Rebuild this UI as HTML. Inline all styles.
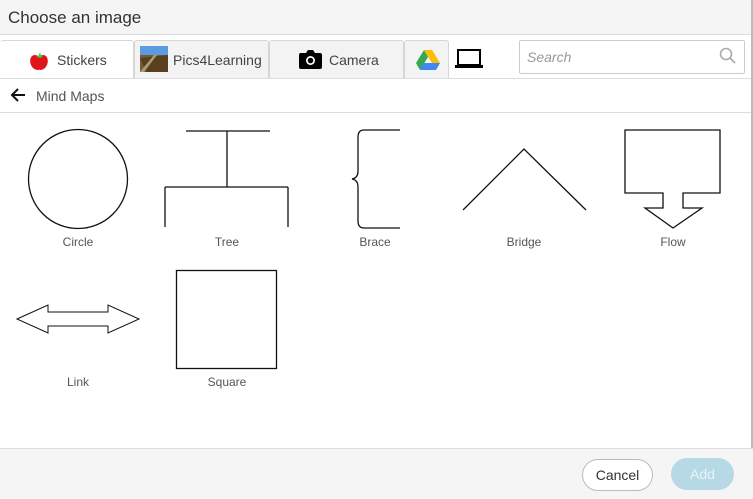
<!DOCTYPE html>
<html><head><meta charset="utf-8"><style>
*{margin:0;padding:0;box-sizing:border-box}
body{width:753px;height:499px;background:#fff;font-family:"Liberation Sans",Arial,sans-serif;position:relative;overflow:hidden;color:#444}
.a{position:absolute}
.tab{position:absolute;top:40px;height:38px;background:#f3f3f3;border:1px solid #d6d6d6;border-bottom:none;border-radius:3px 3px 0 0;font-size:14px;color:#444;display:flex;align-items:center}
.lbl{position:absolute;font-size:12px;color:#555;text-align:center;width:120px}
</style></head><body>
<div class="a" style="left:0;top:0;width:753px;height:35px;background:#f5f5f5;border-bottom:1px solid #ddd"></div>
<div class="a" style="left:8px;top:8px;font-size:17px;color:#333">Choose an image</div>
<div class="a" style="left:0;top:78px;width:753px;height:1px;background:#ddd"></div>
<div class="tab" style="left:0;width:134px;background:#fff;border-left:none">
<svg class="a" style="left:28px;top:9px" width="22" height="22" viewBox="0 0 20 20"><path d="M10 6C6 3 2 5 2 10c0 5 4 9 8 8 4 1 8-3 8-8 0-5-4-7-8-4z" fill="#e0151b"/><path d="M6 4l3 2 2-4 1 4 3-2-3 3H9z" fill="#3bd23b"/></svg>
<span class="a" style="left:57px;top:11px">Stickers</span></div>
<div class="tab" style="left:134px;width:135px">
<svg class="a" style="left:5px;top:5px" width="28" height="26" viewBox="0 0 28 26"><rect width="28" height="9" fill="#5b9be0"/><rect y="9" width="28" height="17" fill="#7a5a36"/><path d="M0 12L28 9V26H6z" fill="#5a3e22"/><path d="M0 26L14 9h3L4 26z" fill="#a7a070"/></svg>
<span class="a" style="left:38px;top:11px">Pics4Learning</span></div>
<div class="tab" style="left:269px;width:135px">
<svg class="a" style="left:29px;top:9px" width="23" height="19" viewBox="0 0 23 19"><path d="M2 3h5l2-3h5l2 3h5a2 2 0 012 2v12a2 2 0 01-2 2H2a2 2 0 01-2-2V5a2 2 0 012-2z" fill="#000"/><circle cx="11.5" cy="10.5" r="4.5" fill="#fff"/><circle cx="11.5" cy="10.5" r="2.8" fill="#000"/></svg>
<span class="a" style="left:59px;top:11px">Camera</span></div>
<div class="tab" style="left:404px;width:45px">
<svg class="a" style="left:11px;top:9px" width="24" height="20" viewBox="0 0 24 20"><path d="M8 0h8l8 13h-8z" fill="#fbbc04"/><path d="M8 0L0 13l4 7 8-13z" fill="#34a853"/><path d="M4 20h16l4-7H8z" fill="#4285f4"/></svg></div>
<svg class="a" style="left:455px;top:49px" width="28" height="20" viewBox="0 0 28 20"><rect x="3" y="1" width="22" height="15" fill="none" stroke="#000" stroke-width="2"/><rect x="0" y="16" width="28" height="3" fill="#000"/></svg>
<div class="a" style="left:519px;top:40px;width:226px;height:34px;border:1px solid #ccc;border-radius:2px"></div>
<div class="a" style="left:527px;top:49px;font-size:14px;font-style:italic;color:#999">Search</div>
<svg class="a" style="left:719px;top:47px" width="18" height="18" viewBox="0 0 18 18"><circle cx="7" cy="7" r="5.5" fill="none" stroke="#aaa" stroke-width="1.6"/><path d="M11 11l5 5" stroke="#aaa" stroke-width="1.8"/></svg>
<svg class="a" style="left:9px;top:87px" width="18" height="16" viewBox="0 0 18 16"><path d="M16 8H3M9 2L3 8l6 6" fill="none" stroke="#111" stroke-width="2"/></svg>
<div class="a" style="left:36px;top:88px;font-size:14px;color:#555">Mind Maps</div>
<div class="a" style="left:0;top:112px;width:753px;height:1px;background:#ddd"></div>
<div class="a" style="left:751px;top:0;width:2px;height:499px;background:#bbb"></div>
<svg class="a" style="left:0;top:0" width="753" height="499" fill="none" stroke="#111" stroke-width="1.3">
<circle cx="78" cy="179" r="49.5"/>
<path d="M186 131H270M227 131V187M165 187H288M165 187V227M288 187V227"/>
<path d="M400 130H364Q358 130 358 137V171Q358 178 352 179Q358 180 358 187V221Q358 228 364 228H400"/>
<path d="M463 210L524 149L586 210"/>
<path d="M625 130H720V193H683V208H702L673 228L645 208H663V193H625Z"/>
<path d="M17 319L48 305V312H108V305L139 319L108 333V326H48V333Z" stroke-width="1"/>
<rect x="176.5" y="270.5" width="100" height="98"/>
</svg>
<div class="lbl" style="left:18px;top:235px">Circle</div>
<div class="lbl" style="left:167px;top:235px">Tree</div>
<div class="lbl" style="left:315px;top:235px">Brace</div>
<div class="lbl" style="left:464px;top:235px">Bridge</div>
<div class="lbl" style="left:613px;top:235px">Flow</div>
<div class="lbl" style="left:18px;top:375px">Link</div>
<div class="lbl" style="left:167px;top:375px">Square</div>
<div class="a" style="left:0;top:448px;width:753px;height:51px;background:#f5f5f5;border-top:1px solid #ddd"></div>
<div class="a" style="left:582px;top:459px;width:71px;height:32px;border:1px solid #bbb;border-radius:16px;background:#fff;font-size:14px;color:#333;text-align:center;line-height:30px">Cancel</div>
<div class="a" style="left:671px;top:458px;width:63px;height:32px;border-radius:16px;background:#b7d9e6;font-size:14px;color:#e8f4f8;text-align:center;line-height:32px">Add</div>
</body></html>
